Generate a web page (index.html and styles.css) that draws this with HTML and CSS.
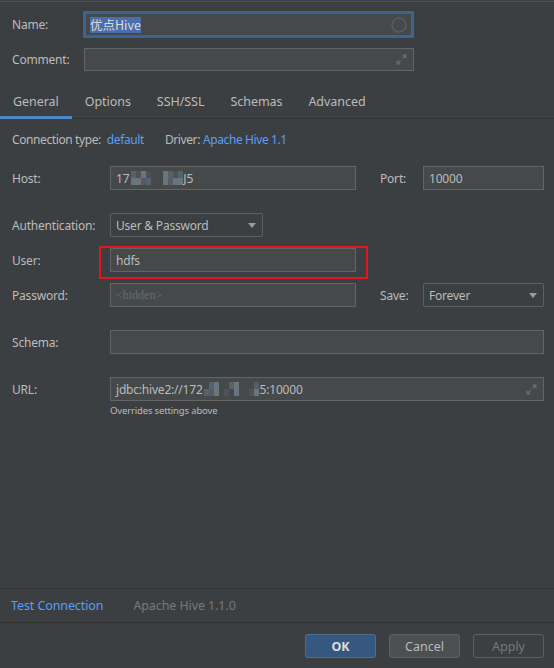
FILE: index.html
```html
<!DOCTYPE html>
<html>
<head>
<meta charset="utf-8">
<link rel="stylesheet" href="styles.css">
</head>
<body>
<div class="window">
  <div class="head">
    <div class="frow name-row">
      <span class="lbl lbl-head">Name:</span>
      <div class="name-field">
        <span class="sel">优点Hive</span>
        <svg class="circle-ic" width="16" height="16" viewBox="0 0 16 16"><circle cx="8" cy="8" r="7" fill="none" stroke="#5e6365" stroke-width="1.2"/></svg>
      </div>
    </div>
    <div class="frow comment-row">
      <span class="lbl lbl-head">Comment:</span>
      <div class="field comment-field">
        <svg class="expand-ic" width="11" height="11" viewBox="0 0 11 11"><polygon points="6,0.5 10.5,0.5 10.5,5" fill="#686d70"/><line x1="9.5" y1="1.5" x2="6.5" y2="4.5" stroke="#686d70" stroke-width="1.2"/><polygon points="0.5,6 0.5,10.5 5,10.5" fill="#686d70"/><line x1="1.5" y1="9.5" x2="4.5" y2="6.5" stroke="#686d70" stroke-width="1.2"/></svg>
      </div>
    </div>
  </div>

  <div class="tabs">
    <span class="tab active">General</span>
    <span class="tab">Options</span>
    <span class="tab">SSH/SSL</span>
    <span class="tab">Schemas</span>
    <span class="tab">Advanced</span>
  </div>

  <div class="conn">
    <span>Connection type:</span><span class="link c-default">default</span>
    <span class="c-driver">Driver:</span><span class="link">Apache Hive 1.1</span>
  </div>

  <div class="form">
    <div class="row">
      <span class="lbl">Host:</span>
      <div class="field host-field">17<span class="mos mos-a"><i class="m1"></i><i class="m2"></i><i class="m3"></i><i class="m4"></i><i class="m2"></i><i class="m5"></i><i class="m3"></i><i class="m1"></i></span><span class="mos mos-b"><i class="m4"></i><i class="m2"></i><i class="m1"></i><i class="m5"></i><i class="m3"></i><i class="m2"></i><i class="m1"></i><i class="m4"></i></span>J5</div>
      <span class="lbl lbl-right">Port:</span>
      <div class="field right-field">10000</div>
    </div>
    <div class="row mt-lg">
      <span class="lbl">Authentication:</span>
      <div class="combo auth-combo">User &amp; Password<span class="arrow"></span></div>
    </div>
    <div class="row mt-sm">
      <span class="lbl">User:</span>
      <div class="user-wrap">
        <div class="field host-field">hdfs</div>
        <div class="annot"></div>
      </div>
    </div>
    <div class="row mt-sm">
      <span class="lbl">Password:</span>
      <div class="field host-field pwd">&lt;hidden&gt;</div>
      <span class="lbl lbl-right">Save:</span>
      <div class="combo right-field">Forever<span class="arrow"></span></div>
    </div>
    <div class="row mt-lg">
      <span class="lbl">Schema:</span>
      <div class="field wide-field"></div>
    </div>
    <div class="row mt-lg">
      <span class="lbl">URL:</span>
      <div class="field wide-field">jdbc:hive2://172<span class="mos mos-c"><i class="m6"></i><i class="m1"></i><i class="m1"></i><i class="m5"></i><i class="m2"></i><i class="m4"></i><i class="m6"></i><i class="m6"></i><i class="m6"></i><i class="m3"></i><i class="m1"></i><i class="m6"></i><i class="m4"></i><i class="m2"></i><i class="m6"></i><i class="m6"></i><i class="m6"></i><i class="m6"></i><i class="m6"></i><i class="m3"></i><i class="m5"></i><i class="m4"></i></span>5:10000
        <svg class="expand-ic" width="11" height="11" viewBox="0 0 11 11"><polygon points="6,0.5 10.5,0.5 10.5,5" fill="#686d70"/><line x1="9.5" y1="1.5" x2="6.5" y2="4.5" stroke="#686d70" stroke-width="1.2"/><polygon points="0.5,6 0.5,10.5 5,10.5" fill="#686d70"/><line x1="1.5" y1="9.5" x2="4.5" y2="6.5" stroke="#686d70" stroke-width="1.2"/></svg>
      </div>
    </div>
    <div class="hint">Overrides settings above</div>
  </div>

  <div class="footer">
    <div class="foot-info">
      <span class="link">Test Connection</span>
      <span class="ver">Apache Hive 1.1.0</span>
    </div>
    <div class="buttons">
      <span class="btn ok">OK</span>
      <span class="btn cancel">Cancel</span>
      <span class="btn apply">Apply</span>
    </div>
  </div>
</div>
</body>
</html>
```
FILE: styles.css
```css
* { box-sizing: border-box; }
html, body { margin: 0; padding: 0; }
body {
  background: #3c3f41;
  color: #bbbbbb;
  font-family: "Noto Sans", "Noto Sans CJK SC", sans-serif;
  font-size: 12px;
  letter-spacing: -0.2px;
}
.window {
  height: 668px;
  display: flex;
  flex-direction: column;
}
.head {
  margin-top: 1px;
  border-top: 1px solid #4d5153;
  padding-top: 9px;
  padding-left: 12px;
}
.frow { display: flex; align-items: center; }
.name-row { height: 27px; }
.comment-row { height: 23px; margin-top: 10px; }
.lbl-head { width: 71px; flex: none; }
.lbl { white-space: nowrap; }
.name-field {
  width: 331px;
  height: 27px;
  border: 3px solid #3b6493;
  background: #45494a;
  display: flex;
  align-items: center;
  padding-left: 4px;
  padding-right: 4px;
}
.sel {
  background: #4b6eaf;
  color: #dadada;
  line-height: 16px;
  font-family: "Noto Sans CJK SC", "Noto Sans", sans-serif;
  font-size: 12.5px;
  letter-spacing: 0;
}
.circle-ic { margin-left: auto; }
.field {
  background: #45494a;
  border: 1px solid #646464;
  height: 24px;
  display: flex;
  align-items: center;
  padding-left: 5px;
  padding-right: 6px;
  color: #bbbbbb;
  white-space: nowrap;
}
.comment-field {
  width: 330px;
  height: 23px;
  margin-left: 1px;
  justify-content: flex-end;
}
.expand-ic { margin-left: auto; flex: none; }

.tabs {
  display: flex;
  height: 33px;
  margin-top: 15px;
  box-shadow: inset 0 -1px 0 #313335;
}
.tab {
  padding: 1px 13px 0;
  line-height: 29px;
  height: 33px;
  border-bottom: 3px solid transparent;
  font-size: 12.5px;
  letter-spacing: -0.05px;
}
.tab.active { border-bottom-color: #4a88c7; }

.conn {
  display: flex;
  height: 20px;
  line-height: 20px;
  margin-top: 11px;
  padding-left: 12px;
  letter-spacing: -0.4px;
}
.link { color: #589df6; }
.c-default { margin-left: 6px; }
.c-driver { margin-left: 21px; margin-right: 3px; }

.form { padding-left: 12px; padding-right: 10px; margin-top: 16px; }
.row { display: flex; align-items: center; height: 24px; }
.row > .lbl:first-child { width: 98px; flex: none; }
.mt-lg { margin-top: 23px; }
.mt-sm { margin-top: 11px; }
.host-field { width: 246px; }
.lbl-right { width: 43px; margin-left: 24px; flex: none; }
.right-field { width: 121px; }
.wide-field { flex: 1; }
.pwd {
  font-family: "Liberation Serif", serif;
  font-size: 12px;
  letter-spacing: 0;
  color: #6a6c6d;
}
.combo {
  height: 24px;
  border: 1px solid #5e6060;
  border-radius: 2px;
  display: flex;
  align-items: center;
  padding-left: 5px;
  padding-right: 6px;
  white-space: nowrap;
}
.auth-combo { width: 153px; }
.arrow {
  margin-left: auto;
  width: 0;
  height: 0;
  border-left: 4.5px solid transparent;
  border-right: 4.5px solid transparent;
  border-top: 5px solid #9a9da0;
}
.user-wrap { position: relative; }
.annot {
  position: absolute;
  left: -11px;
  top: -2px;
  width: 269px;
  height: 33px;
  border: 2px solid #e2151f;
}
.hint {
  font-size: 9.5px;
  letter-spacing: -0.15px;
  margin-left: 98px;
  margin-top: 3px;
  line-height: 14px;
}
.mos {
  display: inline-grid;
  grid-auto-flow: column;
  grid-template-rows: 7px 7px;
  grid-auto-columns: 5px;
  vertical-align: middle;
  opacity: 0.85;
}
.mos i { display: block; }
.mos-a { margin-left: 2px; }
.mos-b { margin-left: 12px; }
.mos-c { margin-left: 1px; margin-right: 1px; }
.m1 { background: #5a6874; }
.m2 { background: #6b7d8c; }
.m3 { background: #4e555b; }
.m4 { background: #767d82; }
.m5 { background: #59606a; }
.m6 { background: #45494a; }

.footer { margin-top: auto; }
.foot-info {
  border-top: 1px solid #323232;
  height: 34px;
  line-height: 33px;
  padding-left: 11px;
  display: flex;
  font-size: 12.5px;
  letter-spacing: -0.1px;
}
.ver { color: #787878; margin-left: 30px; }
.buttons {
  border-top: 1px solid #323232;
  height: 46px;
  display: flex;
  justify-content: flex-end;
  gap: 13px;
  padding: 11px 10px 10px 0;
}
.btn {
  width: 71px;
  height: 24px;
  border-radius: 3px;
  display: flex;
  align-items: center;
  justify-content: center;
  font-size: 12.5px;
  letter-spacing: 0;
}
.ok { background: #365880; border: 1px solid #4c708c; color: #dcdcdc; font-weight: bold; }
.cancel { background: #4c5052; border: 1px solid #5e6060; }
.apply { border: 1px solid #5e6060; color: #777777; }
```
